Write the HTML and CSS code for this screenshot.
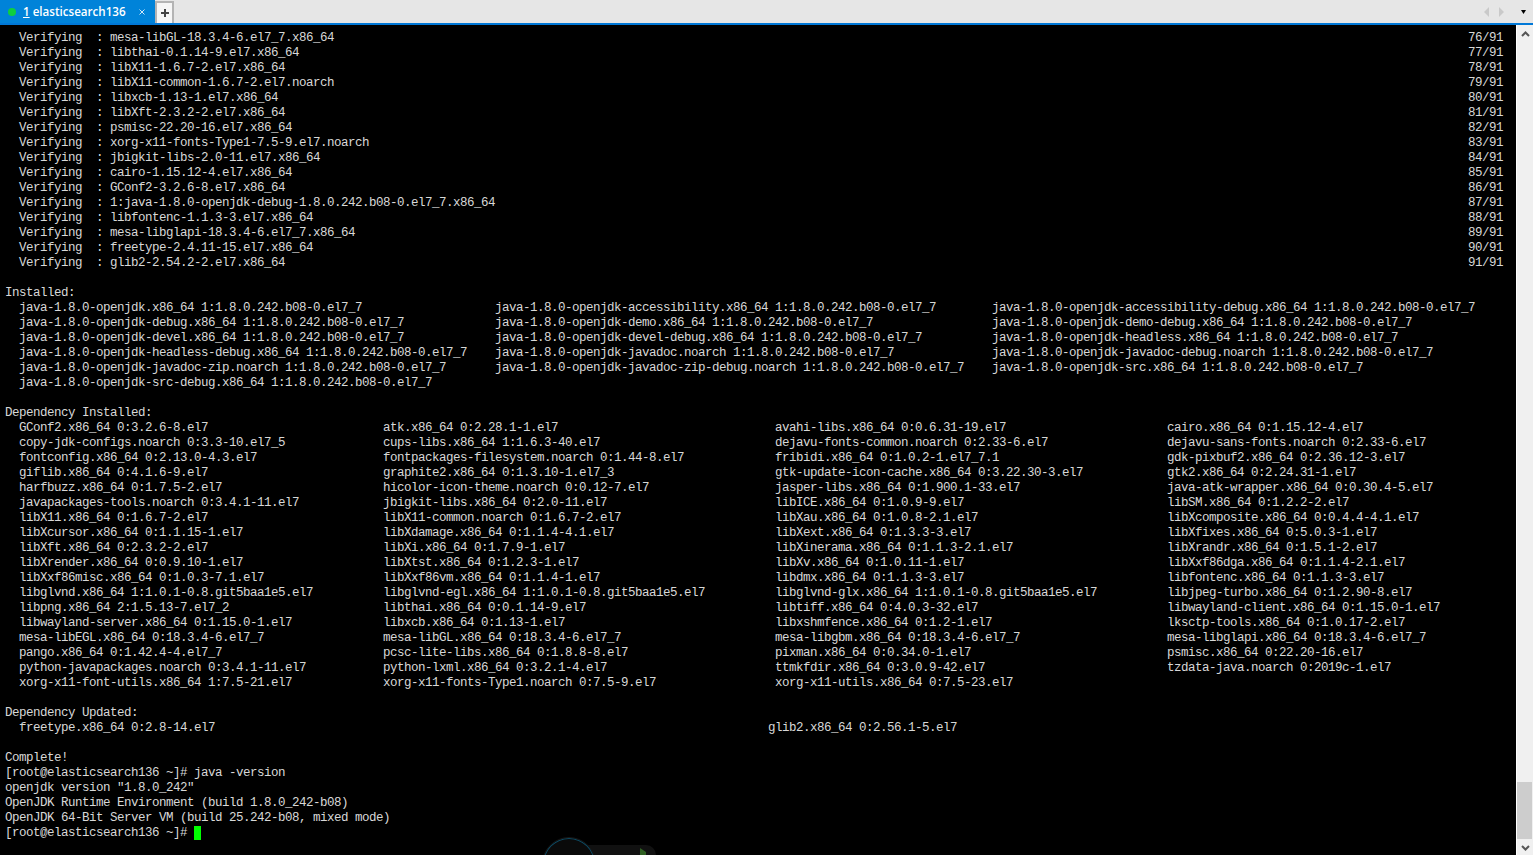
FILE: index.html
```html
<!DOCTYPE html>
<html lang="en">
<head>
<meta charset="utf-8">
<title>elasticsearch136</title>
<link rel="stylesheet" href="styles.css">
</head>
<body>
<div class="tabbar">
  <div class="tab">
    <span class="dot"></span>
    <span class="tab-title"><u>1</u> elasticsearch136</span>
    <svg class="tab-close" width="6" height="6" viewBox="0 0 6 6"><path d="M.5.5l5 5M5.500.5l-5 5" stroke="#cfe6f7" fill="none"/></svg>
  </div>
  <div class="add">
    <svg width="8" height="8" viewBox="0 0 8 8"><path d="M4 0v8M0 4h8" stroke="#444" stroke-width="2" fill="none"/></svg>
  </div>
  <div class="tab-nav">
    <svg width="5" height="10" viewBox="0 0 5 10"><path d="M5 0v10L0 5z" fill="#c9c9c9"/></svg>
    <svg class="nav-next" width="5" height="10" viewBox="0 0 5 10"><path d="M0 0v10L5 5z" fill="#c9c9c9"/></svg>
    <svg class="tab-menu" width="5" height="4" viewBox="0 0 5 4"><path d="M0 0h5L2.500 4z" fill="#000"/></svg>
  </div>
</div>
<div class="main">
  <div class="terminal">
    <div class="verify"><span>  Verifying  : mesa-libGL-18.3.4-6.el7_7.x86_64</span><span>76/91</span></div>
    <div class="verify"><span>  Verifying  : libthai-0.1.14-9.el7.x86_64</span><span>77/91</span></div>
    <div class="verify"><span>  Verifying  : libX11-1.6.7-2.el7.x86_64</span><span>78/91</span></div>
    <div class="verify"><span>  Verifying  : libX11-common-1.6.7-2.el7.noarch</span><span>79/91</span></div>
    <div class="verify"><span>  Verifying  : libxcb-1.13-1.el7.x86_64</span><span>80/91</span></div>
    <div class="verify"><span>  Verifying  : libXft-2.3.2-2.el7.x86_64</span><span>81/91</span></div>
    <div class="verify"><span>  Verifying  : psmisc-22.20-16.el7.x86_64</span><span>82/91</span></div>
    <div class="verify"><span>  Verifying  : xorg-x11-fonts-Type1-7.5-9.el7.noarch</span><span>83/91</span></div>
    <div class="verify"><span>  Verifying  : jbigkit-libs-2.0-11.el7.x86_64</span><span>84/91</span></div>
    <div class="verify"><span>  Verifying  : cairo-1.15.12-4.el7.x86_64</span><span>85/91</span></div>
    <div class="verify"><span>  Verifying  : GConf2-3.2.6-8.el7.x86_64</span><span>86/91</span></div>
    <div class="verify"><span>  Verifying  : 1:java-1.8.0-openjdk-debug-1.8.0.242.b08-0.el7_7.x86_64</span><span>87/91</span></div>
    <div class="verify"><span>  Verifying  : libfontenc-1.1.3-3.el7.x86_64</span><span>88/91</span></div>
    <div class="verify"><span>  Verifying  : mesa-libglapi-18.3.4-6.el7_7.x86_64</span><span>89/91</span></div>
    <div class="verify"><span>  Verifying  : freetype-2.4.11-15.el7.x86_64</span><span>90/91</span></div>
    <div class="verify"><span>  Verifying  : glib2-2.54.2-2.el7.x86_64</span><span>91/91</span></div>
    <div class="line">&nbsp;</div>
    <div class="line">Installed:</div>
    <div class="cols installed">
      <span>java-1.8.0-openjdk.x86_64 1:1.8.0.242.b08-0.el7_7</span><span>java-1.8.0-openjdk-accessibility.x86_64 1:1.8.0.242.b08-0.el7_7</span><span>java-1.8.0-openjdk-accessibility-debug.x86_64 1:1.8.0.242.b08-0.el7_7</span>
      <span>java-1.8.0-openjdk-debug.x86_64 1:1.8.0.242.b08-0.el7_7</span><span>java-1.8.0-openjdk-demo.x86_64 1:1.8.0.242.b08-0.el7_7</span><span>java-1.8.0-openjdk-demo-debug.x86_64 1:1.8.0.242.b08-0.el7_7</span>
      <span>java-1.8.0-openjdk-devel.x86_64 1:1.8.0.242.b08-0.el7_7</span><span>java-1.8.0-openjdk-devel-debug.x86_64 1:1.8.0.242.b08-0.el7_7</span><span>java-1.8.0-openjdk-headless.x86_64 1:1.8.0.242.b08-0.el7_7</span>
      <span>java-1.8.0-openjdk-headless-debug.x86_64 1:1.8.0.242.b08-0.el7_7</span><span>java-1.8.0-openjdk-javadoc.noarch 1:1.8.0.242.b08-0.el7_7</span><span>java-1.8.0-openjdk-javadoc-debug.noarch 1:1.8.0.242.b08-0.el7_7</span>
      <span>java-1.8.0-openjdk-javadoc-zip.noarch 1:1.8.0.242.b08-0.el7_7</span><span>java-1.8.0-openjdk-javadoc-zip-debug.noarch 1:1.8.0.242.b08-0.el7_7</span><span>java-1.8.0-openjdk-src.x86_64 1:1.8.0.242.b08-0.el7_7</span>
      <span>java-1.8.0-openjdk-src-debug.x86_64 1:1.8.0.242.b08-0.el7_7</span>
    </div>
    <div class="line">&nbsp;</div>
    <div class="line">Dependency Installed:</div>
    <div class="cols deps">
      <span>GConf2.x86_64 0:3.2.6-8.el7</span><span>atk.x86_64 0:2.28.1-1.el7</span><span>avahi-libs.x86_64 0:0.6.31-19.el7</span><span>cairo.x86_64 0:1.15.12-4.el7</span>
      <span>copy-jdk-configs.noarch 0:3.3-10.el7_5</span><span>cups-libs.x86_64 1:1.6.3-40.el7</span><span>dejavu-fonts-common.noarch 0:2.33-6.el7</span><span>dejavu-sans-fonts.noarch 0:2.33-6.el7</span>
      <span>fontconfig.x86_64 0:2.13.0-4.3.el7</span><span>fontpackages-filesystem.noarch 0:1.44-8.el7</span><span>fribidi.x86_64 0:1.0.2-1.el7_7.1</span><span>gdk-pixbuf2.x86_64 0:2.36.12-3.el7</span>
      <span>giflib.x86_64 0:4.1.6-9.el7</span><span>graphite2.x86_64 0:1.3.10-1.el7_3</span><span>gtk-update-icon-cache.x86_64 0:3.22.30-3.el7</span><span>gtk2.x86_64 0:2.24.31-1.el7</span>
      <span>harfbuzz.x86_64 0:1.7.5-2.el7</span><span>hicolor-icon-theme.noarch 0:0.12-7.el7</span><span>jasper-libs.x86_64 0:1.900.1-33.el7</span><span>java-atk-wrapper.x86_64 0:0.30.4-5.el7</span>
      <span>javapackages-tools.noarch 0:3.4.1-11.el7</span><span>jbigkit-libs.x86_64 0:2.0-11.el7</span><span>libICE.x86_64 0:1.0.9-9.el7</span><span>libSM.x86_64 0:1.2.2-2.el7</span>
      <span>libX11.x86_64 0:1.6.7-2.el7</span><span>libX11-common.noarch 0:1.6.7-2.el7</span><span>libXau.x86_64 0:1.0.8-2.1.el7</span><span>libXcomposite.x86_64 0:0.4.4-4.1.el7</span>
      <span>libXcursor.x86_64 0:1.1.15-1.el7</span><span>libXdamage.x86_64 0:1.1.4-4.1.el7</span><span>libXext.x86_64 0:1.3.3-3.el7</span><span>libXfixes.x86_64 0:5.0.3-1.el7</span>
      <span>libXft.x86_64 0:2.3.2-2.el7</span><span>libXi.x86_64 0:1.7.9-1.el7</span><span>libXinerama.x86_64 0:1.1.3-2.1.el7</span><span>libXrandr.x86_64 0:1.5.1-2.el7</span>
      <span>libXrender.x86_64 0:0.9.10-1.el7</span><span>libXtst.x86_64 0:1.2.3-1.el7</span><span>libXv.x86_64 0:1.0.11-1.el7</span><span>libXxf86dga.x86_64 0:1.1.4-2.1.el7</span>
      <span>libXxf86misc.x86_64 0:1.0.3-7.1.el7</span><span>libXxf86vm.x86_64 0:1.1.4-1.el7</span><span>libdmx.x86_64 0:1.1.3-3.el7</span><span>libfontenc.x86_64 0:1.1.3-3.el7</span>
      <span>libglvnd.x86_64 1:1.0.1-0.8.git5baa1e5.el7</span><span>libglvnd-egl.x86_64 1:1.0.1-0.8.git5baa1e5.el7</span><span>libglvnd-glx.x86_64 1:1.0.1-0.8.git5baa1e5.el7</span><span>libjpeg-turbo.x86_64 0:1.2.90-8.el7</span>
      <span>libpng.x86_64 2:1.5.13-7.el7_2</span><span>libthai.x86_64 0:0.1.14-9.el7</span><span>libtiff.x86_64 0:4.0.3-32.el7</span><span>libwayland-client.x86_64 0:1.15.0-1.el7</span>
      <span>libwayland-server.x86_64 0:1.15.0-1.el7</span><span>libxcb.x86_64 0:1.13-1.el7</span><span>libxshmfence.x86_64 0:1.2-1.el7</span><span>lksctp-tools.x86_64 0:1.0.17-2.el7</span>
      <span>mesa-libEGL.x86_64 0:18.3.4-6.el7_7</span><span>mesa-libGL.x86_64 0:18.3.4-6.el7_7</span><span>mesa-libgbm.x86_64 0:18.3.4-6.el7_7</span><span>mesa-libglapi.x86_64 0:18.3.4-6.el7_7</span>
      <span>pango.x86_64 0:1.42.4-4.el7_7</span><span>pcsc-lite-libs.x86_64 0:1.8.8-8.el7</span><span>pixman.x86_64 0:0.34.0-1.el7</span><span>psmisc.x86_64 0:22.20-16.el7</span>
      <span>python-javapackages.noarch 0:3.4.1-11.el7</span><span>python-lxml.x86_64 0:3.2.1-4.el7</span><span>ttmkfdir.x86_64 0:3.0.9-42.el7</span><span>tzdata-java.noarch 0:2019c-1.el7</span>
      <span>xorg-x11-font-utils.x86_64 1:7.5-21.el7</span><span>xorg-x11-fonts-Type1.noarch 0:7.5-9.el7</span><span>xorg-x11-utils.x86_64 0:7.5-23.el7</span>
    </div>
    <div class="line">&nbsp;</div>
    <div class="line">Dependency Updated:</div>
    <div class="cols updated">
      <span>freetype.x86_64 0:2.8-14.el7</span><span>glib2.x86_64 0:2.56.1-5.el7</span>
    </div>
    <div class="line">&nbsp;</div>
    <div class="line">Complete!</div>
    <div class="line">[root@elasticsearch136 ~]# java -version</div>
    <div class="line">openjdk version "1.8.0_242"</div>
    <div class="line">OpenJDK Runtime Environment (build 1.8.0_242-b08)</div>
    <div class="line">OpenJDK 64-Bit Server VM (build 25.242-b08, mixed mode)</div>
    <div class="line">[root@elasticsearch136 ~]# <span class="cursor"></span></div>
    <div class="badge">
      <span class="badge-ring"></span>
      <svg class="badge-arrow" width="8" height="8" viewBox="0 0 8 8"><path d="M1 0l6 4v4H1z" fill="#2f5f22"/></svg>
    </div>
  </div>
  <div class="scrollbar">
    <svg class="arrow" width="9" height="6" viewBox="0 0 9 6"><path d="M1 5l3.500-3.500L8 5" stroke="#555" stroke-width="2" fill="none"/></svg>
    <div class="track"><div class="thumb"></div></div>
    <svg class="arrow" width="9" height="6" viewBox="0 0 9 6"><path d="M1 1l3.500 3.500L8 1" stroke="#555" stroke-width="2" fill="none"/></svg>
  </div>
</div>
</body>
</html>
```

FILE: styles.css
```css
* { box-sizing: border-box; }
html, body { margin: 0; height: 100%; overflow: hidden; }
body { display: flex; flex-direction: column; background: #000; }

.tabbar {
  height: 25px;
  flex: none;
  display: flex;
  align-items: stretch;
  background: #e6e6e6;
  border-bottom: 2px solid #0078d7;
}
.tab {
  width: 155px;
  display: flex;
  align-items: center;
  background: #0083d9;
  padding-left: 8px;
  color: #fff;
  font: 600 11.6px "Open Sans", sans-serif;
}
.dot { width: 8px; height: 8px; border-radius: 50%; background: #0fcf3f; margin-right: 7px; }
.tab-title { white-space: pre; flex: 1; }
.tab-close { margin-right: 10px; margin-bottom: 0; }
.add {
  width: 19px;
  margin-top: 1px;
  background: #f6f6f6;
  border: 2px solid #b4b4b4;
  border-bottom: 0;
  display: flex;
  align-items: center;
  justify-content: center;
}
.tab-nav {
  margin-left: auto;
  display: flex;
  align-items: center;
  gap: 10px;
  padding-right: 7px;
}
.tab-menu { margin-left: 7px; }

.main { flex: 1; display: flex; min-height: 0; }
.terminal {
  flex: 1;
  position: relative;
  overflow: hidden;
  padding: 6px 13px 0 5px;
  background: #000;
  color: #d8d8d8;
  font: 12.5px/15px "Liberation Mono", monospace;
  letter-spacing: -0.5px;
}
.line { height: 15px; white-space: pre; }
.verify { height: 15px; display: flex; justify-content: space-between; }
.verify span { white-space: pre; }
.cols { display: grid; padding-left: 14px; grid-auto-rows: 15px; }
.cols span { white-space: pre; }
.installed { grid-template-columns: 476px 497px 1fr; }
.deps { grid-template-columns: 364px 392px 392px 1fr; }
.updated { grid-template-columns: 749px 1fr; }
.cursor { display: inline-block; width: 7px; height: 14px; background: #00ff00; vertical-align: -4px; }

.badge {
  position: absolute;
  left: 545px;
  top: 820px;
  width: 111px;
  height: 30px;
  border-radius: 14px 14px 0 0;
}
.badge::before {
  content: "";
  position: absolute;
  left: 20px;
  right: 0;
  top: 0;
  bottom: 0;
  background: #111;
  border-radius: 10px 10px 0 0;
}
.badge-ring {
  position: absolute;
  left: -3px;
  top: -8px;
  width: 54px;
  height: 54px;
  border-radius: 50%;
  background: #0a0a0a;
  border: 1px solid #161616;
  box-shadow: inset 0 0 0 1px #0c4a63;
}
.badge-arrow { position: absolute; left: 94px; top: 3px; }

.scrollbar {
  width: 17px;
  flex: none;
  display: flex;
  flex-direction: column;
  align-items: center;
  background: #f0f0f0;
  border-left: 1px solid #fff;
  padding: 6px 0 4px;
}
.track { flex: 1; width: 100%; display: flex; flex-direction: column; justify-content: flex-end; padding-bottom: 6px; }
.thumb { height: 57px; margin-right: 1px; background: #cdcdcd; }
.arrow { flex: none; }
```
